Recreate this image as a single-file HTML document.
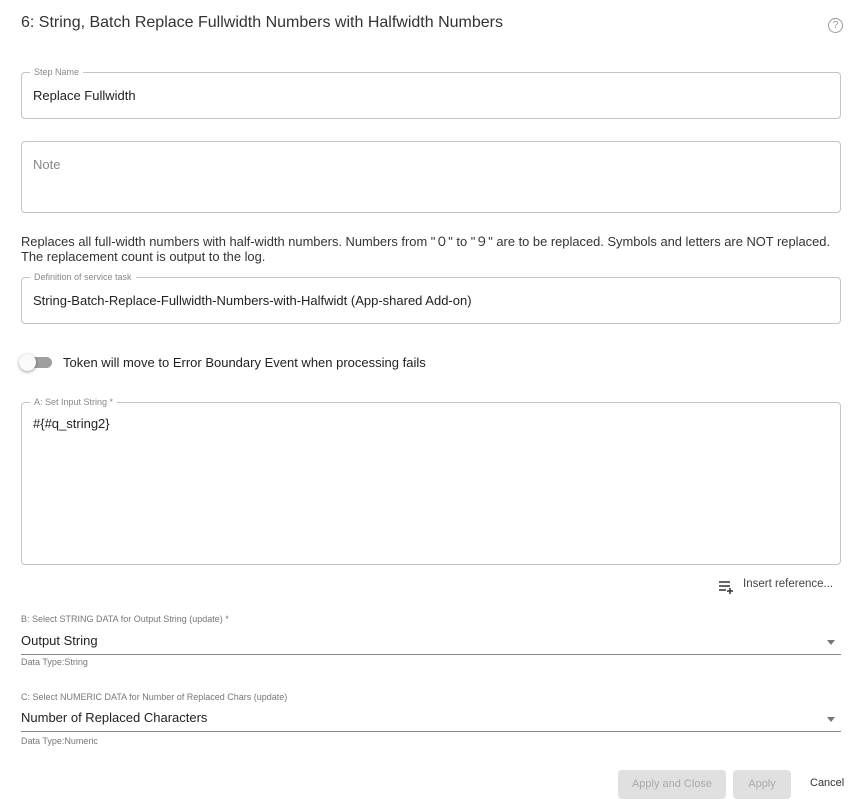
<!DOCTYPE html>
<html><head><meta charset="utf-8"><style>
*{box-sizing:border-box;margin:0;padding:0}
body{width:862px;height:804px;background:#fff;font-family:"Liberation Sans",sans-serif;color:#222;position:relative;overflow:hidden}
.a{position:absolute}
.box{position:absolute;left:21px;width:820px;border:1px solid #c4c4c4;border-radius:4px}
.lbl{position:absolute;top:-7px;left:8px;background:#fff;padding:0 4px;font-size:9px;color:#888;line-height:12px}
.t{font-size:13px;line-height:16px}
.sel{position:absolute;left:21px;width:820px;border-bottom:1px solid #888;height:24px}
.arr{position:absolute;right:6px;top:9px;width:0;height:0;border-left:4px solid transparent;border-right:4px solid transparent;border-top:5px solid #777}
.small{font-size:9px;color:#777}
.btn{position:absolute;top:770px;height:29px;background:#e0e0e0;border-radius:4px;color:#aaa;font-size:11px;line-height:29px;text-align:center}
</style></head><body>
<div class="a" style="left:21px;top:14px;font-size:16px;color:#333">6: String, Batch Replace Fullwidth Numbers with Halfwidth Numbers</div>
<div class="a" style="left:828px;top:18px;width:15px;height:15px;border:1.3px solid #999;border-radius:50%;font-size:10px;color:#999;text-align:center;line-height:13px">?</div>

<div class="box" style="top:72px;height:47px"><div class="lbl">Step Name</div><div class="a t" style="left:11px;top:15px">Replace Fullwidth</div></div>
<div class="box" style="top:141px;height:72px"><div class="a t" style="left:11px;top:15px;color:#888">Note</div></div>

<div class="a" style="left:21px;top:234px;font-size:12.9px;line-height:15px;color:#333;white-space:nowrap">Replaces all full-width numbers with half-width numbers. Numbers from "０" to "９" are to be replaced. Symbols and letters are NOT replaced.<br>The replacement count is output to the log.</div>

<div class="box" style="top:277px;height:47px"><div class="lbl">Definition of service task</div><div class="a t" style="left:11px;top:15px">String-Batch-Replace-Fullwidth-Numbers-with-Halfwidt (App-shared Add-on)</div></div>

<div class="a" style="left:22px;top:357px;width:30px;height:11px;background:#9e9e9e;border-radius:6px"></div>
<div class="a" style="left:19px;top:354px;width:17px;height:17px;background:#fafafa;border-radius:50%;box-shadow:0 1px 3px rgba(0,0,0,.4)"></div>
<div class="a t" style="left:63px;top:355px">Token will move to Error Boundary Event when processing fails</div>

<div class="box" style="top:402px;height:163px"><div class="lbl">A: Set Input String *</div><div class="a t" style="left:11px;top:13px">#{#q_string2}</div></div>

<svg class="a" style="left:719px;top:580px" width="16" height="14" viewBox="0 0 16 14"><path d="M0 2h11M0 6h11M0 10h7M11 8v6M8 11h6" stroke="#333" stroke-width="1.5" fill="none"/></svg>
<div class="a" style="left:743px;top:578px;font-size:11.5px;color:#444">Insert reference...</div>

<div class="a small" style="left:21px;top:614px">B: Select STRING DATA for Output String (update) *</div>
<div class="sel" style="top:631px"><div class="a t" style="left:0;top:2px">Output String</div><div class="arr"></div></div>
<div class="a small" style="left:21px;top:657px">Data Type:String</div>

<div class="a small" style="left:21px;top:692px">C: Select NUMERIC DATA for Number of Replaced Chars (update)</div>
<div class="sel" style="top:708px"><div class="a t" style="left:0;top:2px">Number of Replaced Characters</div><div class="arr"></div></div>
<div class="a small" style="left:21px;top:736px">Data Type:Numeric</div>

<div class="btn" style="left:618px;width:108px">Apply and Close</div>
<div class="btn" style="left:733px;width:58px">Apply</div>
<div class="a" style="left:810px;top:777px;font-size:11px;color:#333">Cancel</div>
</body></html>
